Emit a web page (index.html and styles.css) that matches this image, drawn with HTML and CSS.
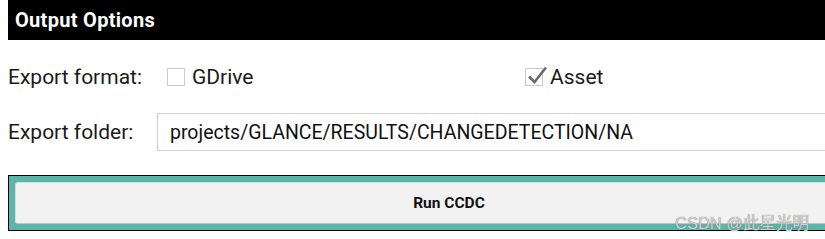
FILE: index.html
```html
<!DOCTYPE html>
<html lang="en">
<head>
    <title>Output Options</title>
    <link rel="stylesheet" href="styles.css">
</head>
<body>
    <div class="panel">
        <div class="panel-title">Output Options</div>

        <div class="row">
            <span class="row-label">Export format:</span>
            <div class="options">
                <label class="option">
                    <span class="check-box"></span>
                    <span>GDrive</span>
                </label>
                <label class="option">
                    <span class="check-box checked">
                        <svg class="tick" width="22" height="22" viewBox="0 0 22 22">
                            <path d="M3 11.5 L8.5 17 L20 2.5" fill="none" stroke="#6b6b6b" stroke-width="2.6"/>
                        </svg>
                    </span>
                    <span>Asset</span>
                </label>
            </div>
        </div>

        <div class="row">
            <span class="row-label">Export folder:</span>
            <input class="folder-input" type="text" value="projects/GLANCE/RESULTS/CHANGEDETECTION/NA">
        </div>

        <div class="run-wrap">
            <button class="run-btn">Run CCDC</button>
        </div>
    </div>

    <div class="watermark">CSDN @此星光明</div>
</body>
</html>
```

FILE: styles.css
```css
body {
    margin: 0 0 0 8px;
    overflow: hidden;
    font-family: Roboto, "Noto Sans CJK SC", sans-serif;
    background: white;
    color: #1a1a1a;
}

.panel {
    width: 882px;
}

.panel-title {
    height: 40px;
    line-height: 40px;
    background: #000;
    color: white;
    font-size: 20px;
    font-weight: bold;
    letter-spacing: 0.3px;
    padding-left: 7px;
}

.row {
    display: flex;
    align-items: center;
    height: 38px;
    margin-top: 18px;
    font-size: 21px;
}

.row + .row {
    margin-top: 17px;
}

.row-label {
    width: 149px;
    flex-shrink: 0;
}

.options {
    display: flex;
    padding-left: 10px;
}

.option {
    display: flex;
    align-items: center;
    width: 358px;
}

.check-box {
    position: relative;
    width: 18px;
    height: 18px;
    border: 1px solid #cacaca;
    background: white;
    margin-right: 7px;
    box-sizing: border-box;
    flex-shrink: 0;
}

.tick {
    position: absolute;
    left: 0px;
    top: -4px;
}

.folder-input {
    flex: 1;
    height: 38px;
    box-sizing: border-box;
    border: 1px solid #cfcfcf;
    padding: 0 12px;
    font-family: Roboto, sans-serif;
    font-size: 19.5px;
    color: #111;
    outline: none;
}

.run-wrap {
    margin-top: 24px;
    border: 1px solid #000;
    background: #5bb5aa;
    padding: 6px;
}

.run-btn {
    display: block;
    width: 100%;
    height: 42px;
    background: #f2f2f2;
    border: 1px solid #dcdcdc;
    border-bottom-color: #c4c4c4;
    border-radius: 3px;
    font-family: Roboto, sans-serif;
    font-size: 15.5px;
    font-weight: bold;
    color: #111;
}

.watermark {
    position: absolute;
    left: 675px;
    top: 210px;
    font-family: "Liberation Sans", "Noto Sans CJK SC", sans-serif;
    font-size: 16.5px;
    color: #d2d2d2;
    text-shadow: 0 0 1px #6a6a6a;
}
```
